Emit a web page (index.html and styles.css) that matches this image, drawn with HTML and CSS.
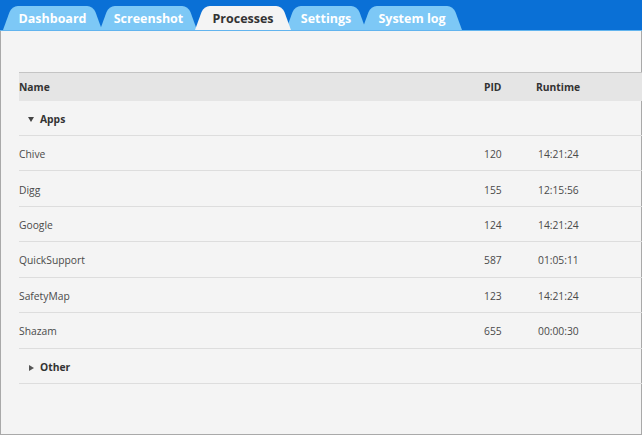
FILE: index.html
```html
<!DOCTYPE html>
<html>
<head>
<meta charset="utf-8">
<link rel="stylesheet" href="styles.css">
</head>
<body>
<div class="window">
  <div class="tabbar">
    <div class="tab t-dash">Dashboard</div>
    <div class="tab t-shot">Screenshot</div>
    <div class="tab t-proc active">Processes</div>
    <div class="tab t-set">Settings</div>
    <div class="tab t-log">System log</div>
  </div>
  <div class="content">
    <div class="table">
      <div class="row head">
        <div class="c-name">Name</div>
        <div class="c-pid">PID</div>
        <div class="c-run">Runtime</div>
      </div>
      <div class="row group"><span class="caret down"></span>Apps</div>
      <div class="row item"><div class="c-name">Chive</div><div class="c-pid">120</div><div class="c-run">14:21:24</div></div>
      <div class="row item"><div class="c-name">Digg</div><div class="c-pid">155</div><div class="c-run">12:15:56</div></div>
      <div class="row item"><div class="c-name">Google</div><div class="c-pid">124</div><div class="c-run">14:21:24</div></div>
      <div class="row item"><div class="c-name">QuickSupport</div><div class="c-pid">587</div><div class="c-run">01:05:11</div></div>
      <div class="row item"><div class="c-name">SafetyMap</div><div class="c-pid">123</div><div class="c-run">14:21:24</div></div>
      <div class="row item"><div class="c-name">Shazam</div><div class="c-pid">655</div><div class="c-run">00:00:30</div></div>
      <div class="row group"><span class="caret right"></span>Other</div>
    </div>
  </div>
</div>
</body>
</html>
```
FILE: styles.css
```css
* { box-sizing: border-box; }
html, body { margin: 0; padding: 0; }
body {
  width: 642px;
  height: 435px;
  font-family: "Open Sans", "Noto Sans", sans-serif;
  background: #f4f4f4;
  overflow: hidden;
}
.window {
  width: 642px;
  height: 435px;
  border-left: 1px solid #a9a9a9;
  border-right: 1px solid #a9a9a9;
  border-bottom: 1px solid #a9a9a9;
  background: #f4f4f4;
  display: flex;
  flex-direction: column;
}
.tabbar {
  height: 31px;
  background: #0a70d6;
  border-bottom: 1px solid #62b4ee;
  margin: 0 -1px;
  display: flex;
  align-items: flex-end;
  padding-left: 3px;
}
.tab {
  position: relative;
  height: 24px;
  line-height: 25px;
  font-size: 12.5px;
  font-weight: 700;
  color: #ffffff;
  text-align: center;
  z-index: 1;
  flex: none;
}
.tab::before, .tab::after {
  content: "";
  position: absolute;
  top: 0;
  bottom: 0;
  width: 60%;
  background: #7dc8f6;
  z-index: -1;
}
.tab::before {
  left: 0;
  border-radius: 6px 0 0 0;
  transform-origin: bottom left;
  transform: skewX(-20deg);
}
.tab::after {
  right: 0;
  border-radius: 0 6px 0 0;
  transform-origin: bottom right;
  transform: skewX(20deg);
}
.t-dash { width: 99px; margin-right: -2px; }
.t-shot { width: 97px; margin-right: -2px; z-index: 2; }
.t-proc { width: 96px; margin-right: -5px; }
.t-set { width: 80px; margin-right: -4px; z-index: 0; }
.t-log { width: 100px; z-index: 1; }
.tab.active { color: #333333; z-index: 5; }
.tab.active::before, .tab.active::after { background: #f4f4f4; }

.content {
  flex: 1;
  padding: 41px 0 0 18px;
}
.table {
  display: flex;
  flex-direction: column;
  margin-right: -1px;
}
.row {
  display: grid;
  grid-template-columns: 465px 52px 1fr;
  align-items: center;
  font-size: 10.3px;
  color: #4a4a4a;
}
.row.head {
  height: 28.6px;
  border-top: 1px solid #c4c4c4;
  background: #e5e5e5;
  font-weight: 700;
  color: #333;
}
.row.item, .row.group {
  height: 35.43px;
  padding-top: 2px;
  border-bottom: 1px solid #dddddd;
}
.row.group {
  display: flex;
  font-weight: 700;
  color: #333;
  padding-left: 8px;
}
.item .c-run { padding-left: 2px; }
.caret {
  width: 0;
  height: 0;
  margin-right: 6px;
}
.caret.down {
  border-left: 3.5px solid transparent;
  border-right: 3.5px solid transparent;
  border-top: 5px solid #444;
  margin-left: 1px;
  margin-top: 1px;
}
.caret.right {
  border-top: 3.5px solid transparent;
  border-bottom: 3.5px solid transparent;
  border-left: 5px solid #555;
  margin-left: 2px;
  margin-right: 6px;
  margin-top: 2px;
}
```
